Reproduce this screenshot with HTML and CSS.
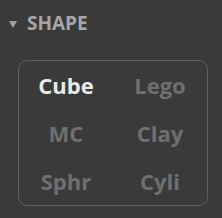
FILE: index.html
```html
<!DOCTYPE html>
<html lang="en">
<head>
<meta charset="utf-8">
<title>Shape</title>
<link rel="stylesheet" href="styles.css">
</head>
<body>
	<div class="panel">
		<div class="panel__head">
			<svg class="panel__arrow" width="8" height="7" viewBox="0 0 8 7"><polygon points="0,0 8,0 4,7" fill="#a0a0a0"/></svg>
			<span class="panel__title">SHAPE</span>
		</div>
		<div class="shape-grid">
			<span class="shape-grid__item shape-grid__item--active">Cube</span>
			<span class="shape-grid__item">Lego</span>
			<span class="shape-grid__item">MC</span>
			<span class="shape-grid__item">Clay</span>
			<span class="shape-grid__item">Sphr</span>
			<span class="shape-grid__item">Cyli</span>
		</div>
	</div>
</body>
</html>
```

FILE: styles.css
```css
html, body {
	margin: 0;
	padding: 0;
	background: #3a3a3a;
	font-family: "Open Sans", "Liberation Sans", sans-serif;
}
.panel {
	padding: 11px 0 0 0;
}
.panel__head {
	display: flex;
	align-items: center;
	height: 24px;
	padding-left: 9px;
}
.panel__arrow {
	display: block;
	margin-top: 2px;
	margin-right: 10px;
}
.panel__title {
	color: #a6a6a6;
	font-size: 19px;
	font-weight: 700;
	line-height: 24px;
}
.shape-grid {
	display: grid;
	grid-template-columns: 1fr 1fr;
	grid-auto-rows: 48px;
	width: 188px;
	margin: 25px 0 0 18px;
	border: 1px solid #5e5e5e;
	border-radius: 9px;
}
.shape-grid__item {
	text-align: center;
	line-height: 48px;
	font-size: 22px;
	font-weight: 700;
	color: #6f6f6f;
}
.shape-grid__item--active {
	color: #ebebeb;
}
```
